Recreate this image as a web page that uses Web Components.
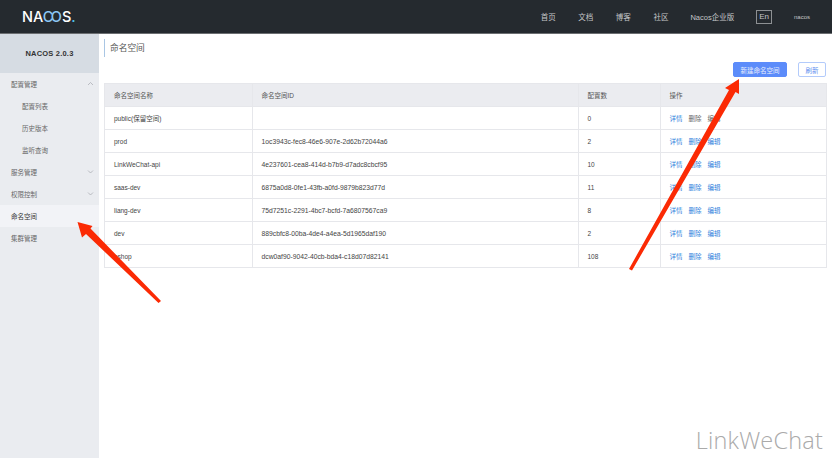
<!DOCTYPE html>
<html lang="zh">
<head>
<meta charset="utf-8">
<title>Nacos</title>
<style>
  html, body { margin: 0; height: 100%; background: #fff; overflow: hidden; }
  body { font-family: "Liberation Sans", "Noto Sans CJK SC", sans-serif; color: #333; }
</style>
</head>
<body>
<nacos-app></nacos-app>

<script>
(function () {
  var FONT = '"Liberation Sans", "Noto Sans CJK SC", sans-serif';

  class NacosHeader extends HTMLElement {
    constructor() {
      super();
      this.attachShadow({ mode: 'open' });
      this.shadowRoot.innerHTML = `
        <style>
          :host { display: flex; align-items: center; height: 34px; box-sizing: border-box; background: #252a2f; border-bottom: 1px solid #6b6e71; color: #c4c6c8; font-size: 7.5px; padding: 0 22px; }
          .logo { color: #fff; font: 500 14.5px "Inter", ${FONT}; display: flex; align-items: center; }
          .logo i { font-style: normal; color: #8cc6f5; letter-spacing: -2.6px; margin: 0 2.6px 0 -.5px; }
          .logo b { font-weight: 500; color: #4fc0e8; }
          nav { margin-left: auto; display: flex; align-items: center; }
          nav a { margin-left: 22.6px; }
          nav a:first-child { margin-left: 0; }
          nav a:last-of-type { margin-left: 22px; }
          .lang { margin-left: 22px; border: 1px solid #8d9093; padding: 2px; line-height: 8px; font-size: 8px; }
          .user { margin-left: 22px; font-size: 6px; }
        </style>
        <div class="logo">NA<i>CO</i>S<b>.</b></div>
        <nav>
          <a>首页</a><a>文档</a><a>博客</a><a>社区</a><a>Nacos企业版</a>
          <span class="lang">En</span>
          <span class="user">nacos</span>
        </nav>`;
    }
  }

  class SideItem extends HTMLElement {
    constructor() {
      super();
      this.attachShadow({ mode: 'open' });
      var arrow = this.getAttribute('arrow');
      var path = arrow === 'up' ? 'M1 4 L3.5 1.5 L6 4' : 'M1 1.5 L3.5 4 L6 1.5';
      this.shadowRoot.innerHTML = `
        <style>
          :host { display: flex; align-items: center; height: 22px; padding: 0 5px 0 11px; font-size: 6.5px; color: #666; }
          :host([sub]) { padding-left: 22px; }
          :host([active]) { background: #f2f3f7; color: #333; }
          svg { margin-left: auto; }
        </style>
        <slot></slot>
        ${arrow ? `<svg width="7" height="6" viewBox="0 0 7 6" fill="none" stroke="#a5a8ad" stroke-width=".7"><path d="${path}"/></svg>` : ''}`;
    }
  }

  class NacosSidebar extends HTMLElement {
    constructor() {
      super();
      this.attachShadow({ mode: 'open' });
      this.shadowRoot.innerHTML = `
        <style>
          :host { display: block; width: 99px; flex: none; background: #eaecf0; }
          .title { height: 39px; display: flex; align-items: center; justify-content: center; background: #d6dce3; font-size: 7.5px; font-weight: 700; color: #333; letter-spacing: .2px; }
        </style>
        <div class="title">NACOS 2.0.3</div>
        <side-item arrow="up">配置管理</side-item>
        <side-item sub>配置列表</side-item>
        <side-item sub>历史版本</side-item>
        <side-item sub>监听查询</side-item>
        <side-item arrow="down">服务管理</side-item>
        <side-item arrow="down">权限控制</side-item>
        <side-item active>命名空间</side-item>
        <side-item>集群管理</side-item>`;
    }
  }

  class PageTitle extends HTMLElement {
    constructor() {
      super();
      this.attachShadow({ mode: 'open' });
      this.shadowRoot.innerHTML = `
        <style>
          :host { display: flex; align-items: center; height: 18px; box-sizing: border-box; padding: 0 0 1.5px 5px; margin-top: 5px; border-left: 1px solid #a9c6e4; font-size: 8.7px; color: #555; }
        </style>
        <slot></slot>`;
    }
  }

  class NsButton extends HTMLElement {
    constructor() {
      super();
      this.attachShadow({ mode: 'open' });
      this.shadowRoot.innerHTML = `
        <style>
          :host { display: flex; align-items: center; justify-content: center; height: 15px; box-sizing: border-box; border-radius: 2px; font-size: 6.5px; border: 1px solid #b3cbfb; background: #fff; color: #5f8ff0; padding: 0 6.5px; }
          :host([primary]) { background: #5c8cfa; border-color: #5c8cfa; color: #e8eefc; }
        </style>
        <slot></slot>`;
    }
  }

  var ROWS = [
    ['public(保留空间)', '', '0'],
    ['prod', '1oc3943c-fec8-46e6-907e-2d62b72044a6', '2'],
    ['LinkWeChat-api', '4e237601-cea8-414d-b7b9-d7adc8cbcf95', '10'],
    ['saas-dev', '6875a0d8-0fe1-43fb-a0fd-9879b823d77d', '11'],
    ['liang-dev', '75d7251c-2291-4bc7-bcfd-7a6807567ca9', '8'],
    ['dev', '889cbfc8-00ba-4de4-a4ea-5d1965daf190', '2'],
    ['eshop', 'dcw0af90-9042-40cb-bda4-c18d07d82141', '108']
  ];

  class NsTable extends HTMLElement {
    constructor() {
      super();
      this.attachShadow({ mode: 'open' });
      var body = ROWS.map(function (r, i) {
        var off = i === 0 ? ' class="off"' : '';
        return `<tr><td>${r[0]}</td><td class="id">${r[1]}</td><td>${r[2]}</td>
          <td><a>详情</a><a${off}>删除</a><a${off}>编辑</a></td></tr>`;
      }).join('');
      this.shadowRoot.innerHTML = `
        <style>
          :host { display: block; margin-top: 6px; font-size: 6.5px; color: #444; }
          table { border-collapse: collapse; table-layout: fixed; width: 722px; }
          th, td { border: 1px solid #e6e7eb; padding: 0 0 0 9px; height: 23px; box-sizing: border-box; text-align: left; font-weight: 400; white-space: nowrap; overflow: hidden; }
          th { background: #ebecf0; color: #555; }
          td.id { font-size: 6.75px; }
          a { color: #2f7fdc; margin-right: 6px; }
          a.off { color: #666; }
        </style>
        <table>
          <colgroup><col style="width:147.5px"><col style="width:326px"><col style="width:82px"><col style="width:166.5px"></colgroup>
          <thead><tr><th>命名空间名称</th><th>命名空间ID</th><th>配置数</th><th>操作</th></tr></thead>
          <tbody>${body}</tbody>
        </table>`;
    }
  }

  class NsPage extends HTMLElement {
    constructor() {
      super();
      this.attachShadow({ mode: 'open' });
      this.shadowRoot.innerHTML = `
        <style>
          :host { display: block; flex: 1; padding: 0 6px 0 5px; min-width: 0; }
          .actions { display: flex; justify-content: flex-end; gap: 11px; margin-top: 5px; }
        </style>
        <page-title>命名空间</page-title>
        <div class="actions">
          <ns-button primary>新建命名空间</ns-button>
          <ns-button>刷新</ns-button>
        </div>
        <ns-table></ns-table>`;
    }
  }

  class NacosApp extends HTMLElement {
    constructor() {
      super();
      this.attachShadow({ mode: 'open' });
      this.shadowRoot.innerHTML = `
        <style>
          :host { display: flex; flex-direction: column; height: 458px; width: 832px; position: relative; overflow: hidden; }
          .body { display: flex; flex: 1; min-height: 0; }
          /* annotations drawn over the screenshot */
          .marks { position: absolute; left: 0; top: 0; pointer-events: none; }
          .mark { position: absolute; right: 9px; bottom: 2px; font: 300 23.5px "Open Sans", ${FONT}; color: #aaa; letter-spacing: .2px; }
        </style>
        <nacos-header></nacos-header>
        <div class="body">
          <nacos-sidebar></nacos-sidebar>
          <ns-page></ns-page>
        </div>
        <svg class="marks" width="832" height="458" viewBox="0 0 832 458">
          <path fill="#fb2a04" d="M77.5 222 L92.5 226 L90.5 228.5 L161 301 L158.5 303 L86 234 L82 237.5 Z"/>
          <path fill="#fb2a04" d="M739 79 L739 94 L735.5 92 L632 270.5 L629 269 L729 90 L725 88 Z"/>
        </svg>
        <div class="mark">LinkWeChat</div>`;
    }
  }

  customElements.define('nacos-header', NacosHeader);
  customElements.define('side-item', SideItem);
  customElements.define('nacos-sidebar', NacosSidebar);
  customElements.define('page-title', PageTitle);
  customElements.define('ns-button', NsButton);
  customElements.define('ns-table', NsTable);
  customElements.define('ns-page', NsPage);
  customElements.define('nacos-app', NacosApp);
})();
</script>
</body>
</html>
